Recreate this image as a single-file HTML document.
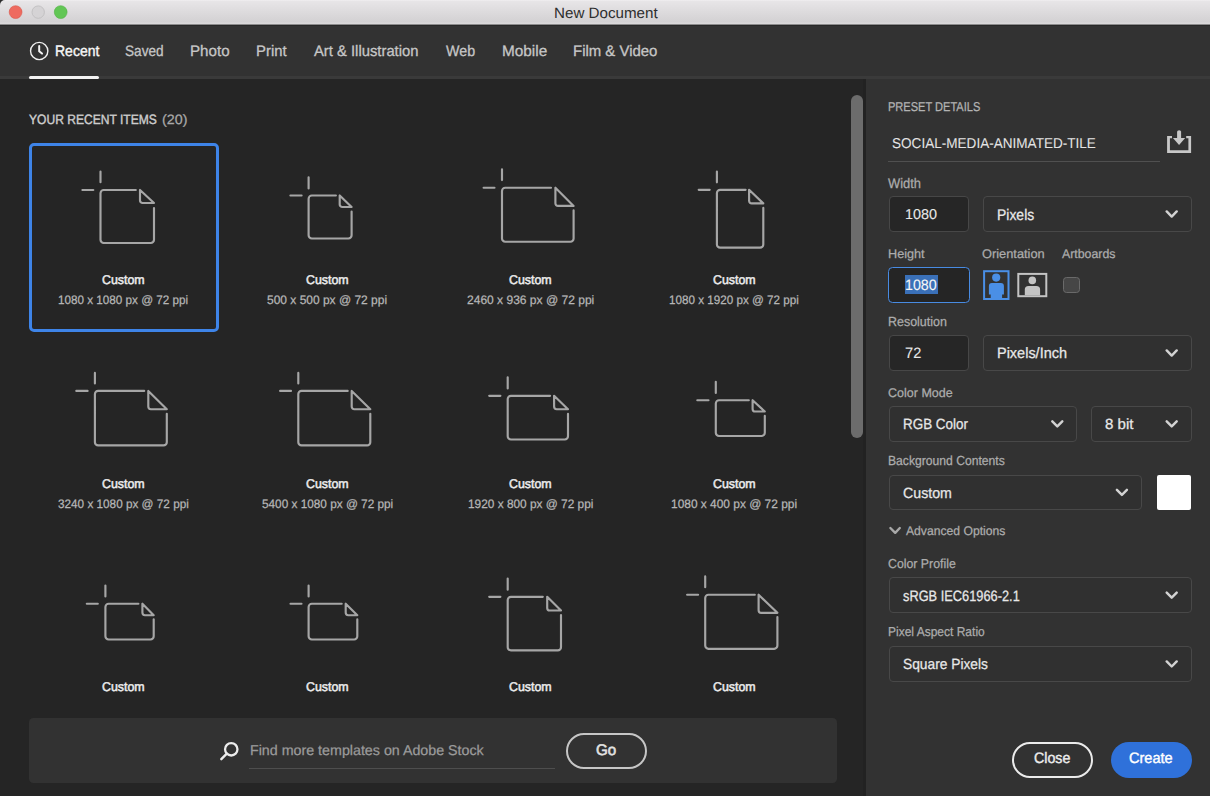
<!DOCTYPE html>
<html><head><meta charset="utf-8"><title>New Document</title><style>
*{margin:0;padding:0;box-sizing:border-box}
html,body{width:1210px;height:796px;overflow:hidden;background:#252525}
body{position:relative;font-family:"Liberation Sans",sans-serif}
.a{position:absolute}
.t{position:absolute;white-space:pre;line-height:20px;transform-origin:0 0;-webkit-text-stroke:0.25px currentColor;text-rendering:geometricPrecision}
.ov{position:absolute;left:0;top:0}
#title{left:0;top:0;width:1210px;height:24px;background:linear-gradient(#f1eff1 0,#e7e5e7 1.5px,#d3d1d3 22px,#dad8da 23px,#dad8da 24px);border-top-left-radius:5px}
#tline{left:0;top:24px;width:1210px;height:2px;background:linear-gradient(#8c8b8c 0,#8c8b8c 1px,#282828 1px,#282828 2px)}
#tabs{left:0;top:26px;width:1210px;height:50px;background:#323232}
#div{left:0;top:76px;width:1210px;height:3px;background:#3a3a3a}
#left{left:0;top:79px;width:866px;height:717px;background:#252525}
#right{left:866px;top:79px;width:344px;height:717px;background:#323232}
#uline{left:29px;top:76px;width:70px;height:3px;border-radius:2px;background:#f2f2f2}
#sel{left:29px;top:142.8px;width:189.5px;height:189.1px;border:3.6px solid #3e84e8;border-radius:5px}
#sb{left:851px;top:95px;width:11.5px;height:343px;border-radius:6px;background:#6c6c6c}
#sbtrack{left:863px;top:79px;width:3px;height:717px;background:#222}
.in{border:1.2px solid #474747;background:#262626;border-radius:4px}
.dd{border:1.2px solid #484848;background:#303030;border-radius:4px}
#search{left:29px;top:718px;width:807.5px;height:65px;background:#323232;border-radius:4.5px}
#sline{left:248.7px;top:767.7px;width:306px;height:1px;background:#4e4e4e}
#go{left:565.6px;top:732.8px;width:81px;height:36px;border:2px solid #c6c6c6;border-radius:18px}
#close{left:1012.1px;top:742.1px;width:81.2px;height:35.8px;border:2.4px solid #ebebeb;border-radius:18px}
#create{left:1110.9px;top:742.2px;width:81px;height:35.6px;background:#2f71da;border-radius:18px}
#pline{left:888px;top:161px;width:272px;height:1px;background:#505050}
#swatch{left:1156.6px;top:475px;width:34.7px;height:34.7px;background:#fff;border-radius:2px}
#hsel{left:905.2px;top:275px;width:32.7px;height:18.6px;background:#3a70b8}
#hin{left:888.1px;top:266.8px;width:81.5px;height:36.1px;border:1.6px solid #488be2;background:#252525;border-radius:4.5px}
#chk{left:1063.1px;top:276.7px;width:16.8px;height:16.4px;border:1.5px solid #6a6a6a;background:#464646;border-radius:3.5px}
</style></head>
<body>
<div class="a" style="left:0;top:0;width:1210px;height:24px;background:#2b2b2b"></div>
<div id="title" class="a"></div>
<div id="tline" class="a"></div>
<div id="tabs" class="a"></div>
<div id="div" class="a"></div>
<div id="left" class="a"></div>
<div id="right" class="a"></div>
<div id="sbtrack" class="a"></div>
<div id="uline" class="a"></div>
<div id="sel" class="a"></div>
<div id="sb" class="a"></div>
<div id="search" class="a"></div>
<div id="sline" class="a"></div>
<div id="go" class="a"></div>
<div id="close" class="a"></div>
<div id="create" class="a"></div>
<div id="pline" class="a"></div>
<div id="swatch" class="a"></div>
<div class="a in" style="left:888.5px;top:196.1px;width:80.5px;height:35.8px"></div><div class="a dd" style="left:983.1px;top:196.1px;width:208.7px;height:35.8px"></div><div class="a in" style="left:888.5px;top:335.0px;width:80.5px;height:36.0px"></div><div class="a dd" style="left:983.1px;top:335.0px;width:208.7px;height:36.0px"></div><div class="a dd" style="left:888.5px;top:405.9px;width:188.6px;height:35.9px"></div><div class="a dd" style="left:1091.1px;top:405.9px;width:100.7px;height:35.9px"></div><div class="a dd" style="left:888.5px;top:474.7px;width:253.9px;height:35.3px"></div><div class="a dd" style="left:888.5px;top:577.0px;width:303.3px;height:36.2px"></div><div class="a dd" style="left:888.5px;top:646.1px;width:303.3px;height:35.7px"></div>
<div id="hin" class="a"></div>
<div id="hsel" class="a"></div>
<div id="chk" class="a"></div>
<svg class="ov" width="1210" height="796" viewBox="0 0 1210 796"><path d="M135.80 190.00H103.70A3.2 3.2 0 0 0 100.50 193.20V239.80A3.2 3.2 0 0 0 103.70 243.00H150.80A3.2 3.2 0 0 0 154.00 239.80V208.00M140.00 190.00V200.40A2.6 2.6 0 0 0 142.60 203.00H154.00ZM100.50 171.50V182.20M82.40 190.00H93.30M335.90 195.50H311.80A3.2 3.2 0 0 0 308.60 198.70V235.30A3.2 3.2 0 0 0 311.80 238.50H348.40A3.2 3.2 0 0 0 351.60 235.30V211.50M339.70 195.50V204.40A2.6 2.6 0 0 0 342.30 207.00H351.60ZM308.60 177.30V188.50M290.40 195.50H301.60M551.00 187.70H505.20A3.2 3.2 0 0 0 502.00 190.90V238.50A3.2 3.2 0 0 0 505.20 241.70H570.40A3.2 3.2 0 0 0 573.60 238.50V210.30M555.40 187.70V203.30A2.6 2.6 0 0 0 558.00 205.90H573.60ZM502.00 169.20V180.10M483.60 187.70H494.50M745.60 189.80H720.10A3.2 3.2 0 0 0 716.90 193.00V244.40A3.2 3.2 0 0 0 720.10 247.60H760.10A3.2 3.2 0 0 0 763.30 244.40V207.90M749.10 189.80V200.80A2.6 2.6 0 0 0 751.70 203.40H763.30ZM716.90 171.60V182.30M698.70 189.80H709.70M144.20 390.90H98.10A3.2 3.2 0 0 0 94.90 394.10V442.20A3.2 3.2 0 0 0 98.10 445.40H163.60A3.2 3.2 0 0 0 166.80 442.20V413.80M148.30 390.90V406.60A2.6 2.6 0 0 0 150.90 409.20H166.80ZM94.90 372.90V383.50M76.30 390.90H87.60M347.70 390.90H301.50A3.2 3.2 0 0 0 298.30 394.10V442.20A3.2 3.2 0 0 0 301.50 445.40H367.10A3.2 3.2 0 0 0 370.30 442.20V413.80M351.70 390.90V406.60A2.6 2.6 0 0 0 354.30 409.20H370.30ZM298.30 372.90V383.50M280.10 390.90H291.00M550.10 395.80H510.90A3.2 3.2 0 0 0 507.70 399.00V436.30A3.2 3.2 0 0 0 510.90 439.50H564.80A3.2 3.2 0 0 0 568.00 436.30V413.80M554.10 395.80V406.60A2.6 2.6 0 0 0 556.70 409.20H568.00ZM507.70 377.30V388.50M489.20 395.80H500.40M748.80 400.20H719.00A3.2 3.2 0 0 0 715.80 403.40V432.80A3.2 3.2 0 0 0 719.00 436.00H761.60A3.2 3.2 0 0 0 764.80 432.80V415.90M752.60 400.20V408.90A2.6 2.6 0 0 0 755.20 411.50H764.80ZM715.80 381.70V392.90M697.30 400.20H708.50M138.40 603.70H108.60A3.2 3.2 0 0 0 105.40 606.90V636.30A3.2 3.2 0 0 0 108.60 639.50H150.50A3.2 3.2 0 0 0 153.70 636.30V619.20M142.40 603.70V612.60A2.6 2.6 0 0 0 145.00 615.20H153.70ZM105.40 585.50V596.50M86.80 603.70H97.80M341.70 603.70H311.80A3.2 3.2 0 0 0 308.60 606.90V636.30A3.2 3.2 0 0 0 311.80 639.50H354.10A3.2 3.2 0 0 0 357.30 636.30V619.20M345.70 603.70V612.60A2.6 2.6 0 0 0 348.30 615.20H357.30ZM308.60 585.50V596.50M290.50 603.70H301.50M542.80 596.80H510.90A3.2 3.2 0 0 0 507.70 600.00V647.20A3.2 3.2 0 0 0 510.90 650.40H557.80A3.2 3.2 0 0 0 561.00 647.20V615.00M547.20 596.80V607.90A2.6 2.6 0 0 0 549.80 610.50H561.00ZM507.70 578.60V589.70M489.20 596.80H500.40M754.80 594.70H708.40A3.2 3.2 0 0 0 705.20 597.90V645.60A3.2 3.2 0 0 0 708.40 648.80H774.20A3.2 3.2 0 0 0 777.40 645.60V617.10M758.60 594.70V610.20A2.6 2.6 0 0 0 761.20 612.80H777.40ZM705.20 576.40V587.20M687.10 594.70H698.10" fill="none" stroke="#a6a6a6" stroke-width="2.15" stroke-linecap="round" stroke-linejoin="round"/></svg>
<svg class="ov" width="1210" height="796" viewBox="0 0 1210 796">
<circle cx="15.6" cy="12.1" r="6.4" fill="#ee6a5f" stroke="#d9574c" stroke-width="0.6"/>
<circle cx="38.2" cy="12.1" r="6.2" fill="#d5d3d5" stroke="#bdbbbd" stroke-width="0.8"/>
<circle cx="60.7" cy="12.1" r="6.4" fill="#62c655" stroke="#53b046" stroke-width="0.6"/>
<circle cx="39.2" cy="51" r="8.65" fill="none" stroke="#f0f0f0" stroke-width="1.4"/>
<path d="M39.2 46V51.2L42 53.6" fill="none" stroke="#f4f4f4" stroke-width="2" stroke-linecap="round" stroke-linejoin="round"/>
<path d="M1166.70 211.45L1171.70 216.55L1176.70 211.45M1166.70 350.45L1171.70 355.55L1176.70 350.45M1052.30 421.30L1057.30 426.40L1062.30 421.30M1166.70 421.30L1171.70 426.40L1176.70 421.30M1116.90 489.80L1121.90 494.90L1126.90 489.80M1166.70 592.55L1171.70 597.65L1176.70 592.55M1166.70 661.40L1171.70 666.50L1176.70 661.40" fill="none" stroke="#d2d2d2" stroke-width="2.4" stroke-linecap="round" stroke-linejoin="round"/>
<path d="M890.4 528L895.2 532.8L899.8 528" fill="none" stroke="#a8a8a8" stroke-width="2.4" stroke-linecap="round" stroke-linejoin="round"/>
<!-- save icon -->
<path d="M1167.1 136H1172V138.2H1169.9V150.2H1188.4V138.2H1186.2V136H1191.1V153H1167.1Z" fill="#c8c8c8"/>
<path d="M1177.1 139V131.7Q1177.1 130.2 1179.1 130.2Q1181.1 130.2 1181.1 131.7V139Z" fill="#c8c8c8"/>
<path d="M1172.9 138.1H1185.2L1179.1 144.9Z" fill="#c8c8c8"/>
<!-- portrait -->
<rect x="984.1" y="271.2" width="24.4" height="27.8" fill="none" stroke="#4a8fe6" stroke-width="2"/>
<circle cx="996.2" cy="277.6" r="4.1" fill="#4a8fe6"/>
<path d="M988.9 298V286.1Q988.9 283.1 991.9 283.1H1000.9Q1003.9 283.1 1003.9 286.1V294.5H1002.1V298H990.7V294.5H988.9Z" fill="#4a8fe6"/>
<!-- landscape -->
<rect x="1018.3" y="273.9" width="28" height="22.3" fill="none" stroke="#c4c4c4" stroke-width="2"/>
<circle cx="1032.3" cy="280.4" r="3.8" fill="#c4c4c4"/>
<path d="M1024.8 295.2V289.8Q1024.8 286.1 1028.5 286.1H1036.4Q1040.1 286.1 1040.1 289.8V295.2Z" fill="#c4c4c4"/>
<!-- search icon -->
<circle cx="231.25" cy="749.3" r="6.2" fill="none" stroke="#ececec" stroke-width="2.3"/>
<path d="M226.8 753.7L221.3 759.2" stroke="#ececec" stroke-width="2.4" stroke-linecap="round"/>
</svg>
<div class="t" style="left:554.31px;top:4.00px;font-size:15.04px;color:#2e2e2e;-webkit-text-stroke-width:0.01px;transform:scaleX(1.0090)">New Document</div>
<div class="t" style="left:54.61px;top:42.00px;font-size:15.18px;color:#f6f6f6;-webkit-text-stroke-width:0.4px;transform:scaleX(0.9220)">Recent</div>
<div class="t" style="left:125.37px;top:42.00px;font-size:15.18px;color:#c6c6c6;-webkit-text-stroke-width:0.3px;transform:scaleX(0.8966)">Saved</div>
<div class="t" style="left:190.22px;top:42.00px;font-size:15.18px;color:#c6c6c6;-webkit-text-stroke-width:0.3px;transform:scaleX(0.9982)">Photo</div>
<div class="t" style="left:255.74px;top:42.00px;font-size:15.18px;color:#c6c6c6;-webkit-text-stroke-width:0.3px;transform:scaleX(0.9808)">Print</div>
<div class="t" style="left:313.90px;top:42.00px;font-size:15.18px;color:#c6c6c6;-webkit-text-stroke-width:0.3px;transform:scaleX(0.9756)">Art &amp; Illustration</div>
<div class="t" style="left:445.50px;top:42.00px;font-size:15.18px;color:#c6c6c6;-webkit-text-stroke-width:0.3px;transform:scaleX(0.9399)">Web</div>
<div class="t" style="left:502.10px;top:42.00px;font-size:15.18px;color:#c6c6c6;-webkit-text-stroke-width:0.3px;transform:scaleX(1.0113)">Mobile</div>
<div class="t" style="left:573.43px;top:42.00px;font-size:15.18px;color:#c6c6c6;-webkit-text-stroke-width:0.3px;transform:scaleX(0.9849)">Film &amp; Video</div>
<div class="t" style="left:28.81px;top:110.00px;font-size:13.58px;color:#cdcdcd;-webkit-text-stroke-width:0.4px;transform:scaleX(0.8889)">YOUR RECENT ITEMS</div>
<div class="t" style="left:162.33px;top:110.00px;font-size:13.58px;color:#a9a9a9;transform:scaleX(1.0522)">(20)</div>
<div class="t" style="left:102.17px;top:270.00px;font-size:12.7px;color:#ececec;-webkit-text-stroke-width:0.5px;transform:scaleX(0.9764)">Custom</div>
<div class="t" style="left:58.17px;top:290.00px;font-size:12.26px;color:#b6b6b6;transform:scaleX(0.9538)">1080 x 1080 px @ 72 ppi</div>
<div class="t" style="left:305.67px;top:270.00px;font-size:12.7px;color:#ececec;-webkit-text-stroke-width:0.5px;transform:scaleX(0.9764)">Custom</div>
<div class="t" style="left:267.13px;top:290.00px;font-size:12.26px;color:#b6b6b6;transform:scaleX(0.9780)">500 x 500 px @ 72 ppi</div>
<div class="t" style="left:509.17px;top:270.00px;font-size:12.7px;color:#ececec;-webkit-text-stroke-width:0.5px;transform:scaleX(0.9764)">Custom</div>
<div class="t" style="left:467.04px;top:290.00px;font-size:12.26px;color:#b6b6b6;transform:scaleX(0.9820)">2460 x 936 px @ 72 ppi</div>
<div class="t" style="left:712.67px;top:270.00px;font-size:12.7px;color:#ececec;-webkit-text-stroke-width:0.5px;transform:scaleX(0.9764)">Custom</div>
<div class="t" style="left:669.37px;top:290.00px;font-size:12.26px;color:#b6b6b6;transform:scaleX(0.9516)">1080 x 1920 px @ 72 ppi</div>
<div class="t" style="left:102.17px;top:474.00px;font-size:12.7px;color:#ececec;-webkit-text-stroke-width:0.5px;transform:scaleX(0.9764)">Custom</div>
<div class="t" style="left:58.03px;top:494.00px;font-size:12.26px;color:#b6b6b6;transform:scaleX(0.9592)">3240 x 1080 px @ 72 ppi</div>
<div class="t" style="left:305.67px;top:474.00px;font-size:12.7px;color:#ececec;-webkit-text-stroke-width:0.5px;transform:scaleX(0.9764)">Custom</div>
<div class="t" style="left:261.53px;top:494.00px;font-size:12.26px;color:#b6b6b6;transform:scaleX(0.9622)">5400 x 1080 px @ 72 ppi</div>
<div class="t" style="left:509.17px;top:474.00px;font-size:12.7px;color:#ececec;-webkit-text-stroke-width:0.5px;transform:scaleX(0.9764)">Custom</div>
<div class="t" style="left:467.86px;top:494.00px;font-size:12.26px;color:#b6b6b6;transform:scaleX(0.9679)">1920 x 800 px @ 72 ppi</div>
<div class="t" style="left:712.67px;top:474.00px;font-size:12.7px;color:#ececec;-webkit-text-stroke-width:0.5px;transform:scaleX(0.9764)">Custom</div>
<div class="t" style="left:670.85px;top:494.00px;font-size:12.26px;color:#b6b6b6;transform:scaleX(0.9726)">1080 x 400 px @ 72 ppi</div>
<div class="t" style="left:102.17px;top:677.00px;font-size:12.7px;color:#ececec;-webkit-text-stroke-width:0.5px;transform:scaleX(0.9764)">Custom</div>
<div class="t" style="left:305.67px;top:677.00px;font-size:12.7px;color:#ececec;-webkit-text-stroke-width:0.5px;transform:scaleX(0.9764)">Custom</div>
<div class="t" style="left:509.17px;top:677.00px;font-size:12.7px;color:#ececec;-webkit-text-stroke-width:0.5px;transform:scaleX(0.9764)">Custom</div>
<div class="t" style="left:712.67px;top:677.00px;font-size:12.7px;color:#ececec;-webkit-text-stroke-width:0.5px;transform:scaleX(0.9764)">Custom</div>
<div class="t" style="left:888.04px;top:97.00px;font-size:12.85px;color:#b3b3b3;transform:scaleX(0.8600)">PRESET DETAILS</div>
<div class="t" style="left:892.08px;top:134.00px;font-size:14.31px;color:#e4e4e4;-webkit-text-stroke-width:0.05px;transform:scaleX(0.9484)">SOCIAL-MEDIA-ANIMATED-TILE</div>
<div class="t" style="left:888.30px;top:173.00px;font-size:13.87px;color:#adadad;transform:scaleX(0.9315)">Width</div>
<div class="t" style="left:904.90px;top:205.00px;font-size:14.31px;color:#e8e8e8;-webkit-text-stroke-width:0.1px;transform:scaleX(1.0071)">1080</div>
<div class="t" style="left:996.81px;top:206.00px;font-size:15.4px;color:#e8e8e8;transform:scaleX(0.9062)">Pixels</div>
<div class="t" style="left:887.71px;top:244.00px;font-size:12.55px;color:#adadad;transform:scaleX(1.0102)">Height</div>
<div class="t" style="left:905.11px;top:276.00px;font-size:15.04px;color:#f6f6f6;-webkit-text-stroke-width:0.1px;transform:scaleX(0.9489)">1080</div>
<div class="t" style="left:982.30px;top:244.00px;font-size:12.55px;color:#adadad;transform:scaleX(1.0217)">Orientation</div>
<div class="t" style="left:1061.80px;top:244.00px;font-size:12.55px;color:#adadad;transform:scaleX(0.9830)">Artboards</div>
<div class="t" style="left:887.72px;top:312.00px;font-size:13.14px;color:#adadad;transform:scaleX(0.9499)">Resolution</div>
<div class="t" style="left:905.21px;top:344.00px;font-size:15.04px;color:#e8e8e8;-webkit-text-stroke-width:0.1px;transform:scaleX(0.9731)">72</div>
<div class="t" style="left:997.07px;top:344.00px;font-size:15.04px;color:#e8e8e8;transform:scaleX(0.9631)">Pixels/Inch</div>
<div class="t" style="left:888.11px;top:383.00px;font-size:12.55px;color:#adadad;transform:scaleX(0.9973)">Color Mode</div>
<div class="t" style="left:902.85px;top:415.00px;font-size:14.74px;color:#e8e8e8;transform:scaleX(0.9124)">RGB Color</div>
<div class="t" style="left:1105.03px;top:415.00px;font-size:14.74px;color:#e8e8e8;transform:scaleX(1.0237)">8 bit</div>
<div class="t" style="left:888.05px;top:451.00px;font-size:13.14px;color:#adadad;transform:scaleX(0.9253)">Background Contents</div>
<div class="t" style="left:902.83px;top:484.00px;font-size:14.74px;color:#e8e8e8;transform:scaleX(0.9629)">Custom</div>
<div class="t" style="left:905.60px;top:521.00px;font-size:12.55px;color:#adadad;transform:scaleX(0.9690)">Advanced Options</div>
<div class="t" style="left:888.12px;top:554.00px;font-size:12.99px;color:#adadad;transform:scaleX(0.9483)">Color Profile</div>
<div class="t" style="left:902.50px;top:587.00px;font-size:15.04px;color:#e8e8e8;transform:scaleX(0.8521)">sRGB IEC61966-2.1</div>
<div class="t" style="left:887.76px;top:622.00px;font-size:12.99px;color:#adadad;transform:scaleX(0.9242)">Pixel Aspect Ratio</div>
<div class="t" style="left:902.57px;top:655.00px;font-size:14.74px;color:#e8e8e8;transform:scaleX(0.9342)">Square Pixels</div>
<div class="t" style="left:1034.23px;top:749.00px;font-size:15.18px;color:#ececec;-webkit-text-stroke-width:0.4px;transform:scaleX(0.9364)">Close</div>
<div class="t" style="left:1129.32px;top:749.00px;font-size:15.18px;color:#ffffff;-webkit-text-stroke-width:0.4px;transform:scaleX(0.9585)">Create</div>
<div class="t" style="left:250.39px;top:741.00px;font-size:14.16px;color:#9b9b9b;transform:scaleX(1.0069)">Find more templates on Adobe Stock</div>
<div class="t" style="left:595.79px;top:741.00px;font-size:15.18px;color:#e2e2e2;-webkit-text-stroke-width:0.6px;transform:scaleX(0.9988)">Go</div>
</body></html>
